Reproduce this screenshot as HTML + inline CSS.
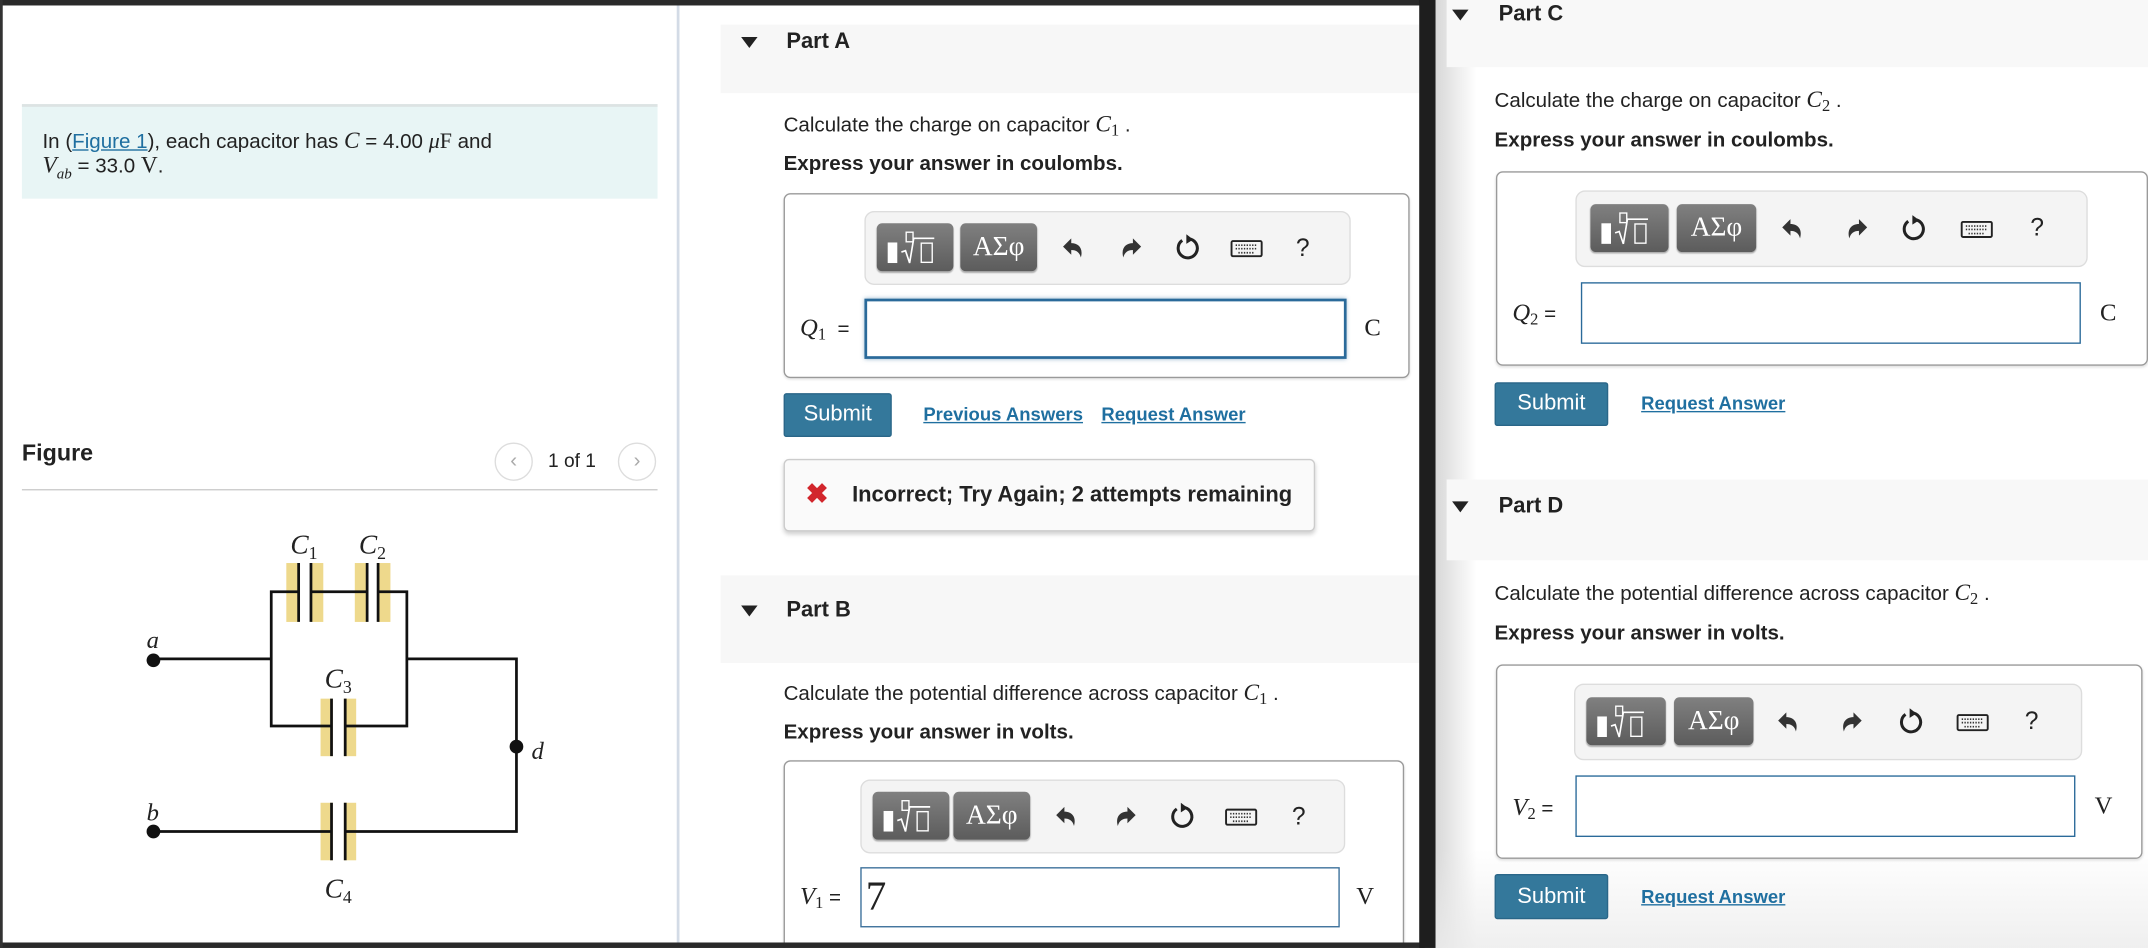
<!DOCTYPE html>
<html><head><meta charset="utf-8">
<style>
html,body{margin:0;padding:0;width:2148px;height:948px;overflow:hidden;background:#fff}
#s{position:absolute;left:0;top:0;width:1568px;height:692px;transform:scale(1.36990);transform-origin:0 0;font-family:"Liberation Sans",sans-serif;color:#222;overflow:hidden;background:#fff}
.a{position:absolute}
.t{position:absolute;white-space:nowrap;font-size:15px;line-height:1}
.b{font-weight:bold}
.m{font-family:"Liberation Serif",serif;font-style:italic}
.sb{font-family:"Liberation Serif",serif;font-size:12px;position:relative;top:3px}
.hdr{position:absolute;background:#f7f7f7}
.tri{position:absolute;width:0;height:0;border-left:6px solid transparent;border-right:6px solid transparent;border-top:8px solid #222}
.box{position:absolute;border:1px solid #9a9a9a;border-radius:5px;background:#fff;box-shadow:0 1px 2px rgba(0,0,0,.12)}
.tb{position:absolute;background:#f4f4f4;border:1px solid #ddd;border-radius:7px}
.btn{position:absolute;top:8px;width:56px;height:35px;border-radius:4px;background:linear-gradient(#808080,#5c5c5c);box-shadow:0 1px 1px rgba(0,0,0,.3)}
.btn2{color:#fff;font-family:"Liberation Serif",serif;font-size:20px;text-align:center;line-height:35px}
.ic{position:absolute}
.inp{position:absolute;border:2px solid #2a6a9a;background:#fff;box-shadow:0 0 3px rgba(42,106,154,.5)}
.sub{position:absolute;background:#34789b;border:1px solid #2a6688;border-radius:2px;color:#fff;font-size:16px;text-align:center}
.lnk{position:absolute;white-space:nowrap;color:#1f6fa0;font-weight:bold;font-size:13.5px;text-decoration:underline}
</style></head><body><div id="s">

<div class="a" style="left:494px;top:4px;width:2px;height:684px;background:#d3dbe6"></div>

<!-- left -->
<div class="a" style="left:16px;top:76px;width:464px;height:67px;background:#e8f5f5;border-top:2px solid #dde3e3"></div>
<div class="t" style="left:31px;top:94px">In (<span style="color:#1f6fa0;text-decoration:underline">Figure 1</span>), each capacitor has <span class="m" style="font-size:17px">C</span> = 4.00 <span class="m" style="font-size:16px">μ</span><span style="font-family:'Liberation Serif',serif;font-size:16px">F</span> and</div>
<div class="t" style="left:31px;top:112px"><span class="m" style="font-size:17px">V<sub style="font-size:11px">ab</sub></span> = 33.0 <span style="font-family:'Liberation Serif',serif;font-size:17px">V</span>.</div>

<div class="t b" style="left:16px;top:322px;font-size:17px">Figure</div>
<div class="a" style="left:361px;top:323px;width:26px;height:26px;border:1px solid #ddd;border-radius:50%;color:#aaa;font-size:15px;text-align:center;line-height:25px">&#x2039;</div>
<div class="t" style="left:400px;top:329px;font-size:14px">1 of 1</div>
<div class="a" style="left:451px;top:323px;width:26px;height:26px;border:1px solid #ddd;border-radius:50%;color:#aaa;font-size:15px;text-align:center;line-height:25px">&#x203A;</div>
<div class="a" style="left:16px;top:357px;width:464px;height:1px;background:#ccc"></div>

<svg class="a" style="left:0;top:360px" width="494" height="328" viewBox="0 360 494 328">
 <g fill="#eed98c">
  <rect x="209" y="411" width="9" height="43"/><rect x="227" y="411" width="9" height="43"/>
  <rect x="259" y="411" width="9" height="43"/><rect x="276" y="411" width="9" height="43"/>
  <rect x="234" y="510" width="9" height="42"/><rect x="251" y="510" width="9" height="42"/>
  <rect x="234" y="586" width="9" height="42"/><rect x="251" y="586" width="9" height="42"/>
 </g>
 <g stroke="#111" stroke-width="2" fill="none">
  <path d="M112 481 H198 V432 H218 M227 432 H268 M276 432 H297 V530 H252 M242 530 H198 V481"/>
  <path d="M297 481 H377 V607 H252 M242 607 H112"/>
  <path d="M218 411 V454 M227 411 V454 M268 411 V454 M276 411 V454 M242 510 V552 M252 510 V552 M242 586 V628 M252 586 V628"/>
 </g>
 <g fill="#111"><circle cx="112" cy="482" r="5"/><circle cx="112" cy="607" r="5"/><circle cx="377" cy="545" r="5"/></g>
 <g font-family="Liberation Serif,serif" font-style="italic" font-size="20" fill="#222">
  <text x="212" y="404">C<tspan font-size="13" font-style="normal" dy="4">1</tspan></text>
  <text x="262" y="404">C<tspan font-size="13" font-style="normal" dy="4">2</tspan></text>
  <text x="237" y="502">C<tspan font-size="13" font-style="normal" dy="4">3</tspan></text>
  <text x="237" y="655">C<tspan font-size="13" font-style="normal" dy="4">4</tspan></text>
  <text x="107" y="473" font-size="18">a</text>
  <text x="107" y="599" font-size="18">b</text>
  <text x="388" y="554" font-size="18">d</text>
 </g>
</svg>

<svg width="0" height="0" style="position:absolute">
 <defs>
  <g id="tpl"><rect x="8" y="14" width="7" height="15" fill="#fff"/><rect x="21.5" y="6.5" width="5" height="7" fill="none" stroke="#fff"/><path d="M18 21 L21 20 L24 29 L27 11 H42" fill="none" stroke="#fff" stroke-width="1.2"/><rect x="32.5" y="14.5" width="8" height="14" fill="none" stroke="#fff"/></g>
  <g id="und"><path d="M1 7 L7 1 V4.5 C12 4.5 16 8 14 15 C13 11 10.5 9.5 7 9.5 V13 Z" fill="#333"/></g>
  <g id="red"><path d="M15 7 L9 1 V4.5 C4 4.5 0 8 2 15 C3 11 5.5 9.5 9 9.5 V13 Z" fill="#333"/></g>
  <g id="rst"><path d="M11 3.5 A7 7 0 1 1 5 4.5" fill="none" stroke="#222" stroke-width="2.2"/><path d="M8 0 L13 3.8 L8 7 Z" fill="#222"/></g>
  <g id="kbd"><rect x="1" y="1" width="22" height="11" rx="1" fill="none" stroke="#222" stroke-width="1.4"/><path d="M4 4H20M4 6.5H20M6 9.5H18" stroke="#333" stroke-width="1.2" stroke-dasharray="1 1"/></g>
 </defs>
</svg>

<!-- Part A -->
<div class="hdr" style="left:526px;top:18px;width:510px;height:50px"></div>
<div class="tri" style="left:541px;top:27px"></div>
<div class="t b" style="left:574px;top:23px;font-size:16px">Part A</div>
<div class="t" style="left:572px;top:82px">Calculate the charge on capacitor <span class="m" style="font-size:17px">C</span><span class="sb">1</span> .</div>
<div class="t b" style="left:572px;top:112px">Express your answer in coulombs.</div>
<div class="box" style="left:572px;top:141px;width:455px;height:133px"></div>
<div class="tb" style="left:631px;top:154px;width:353px;height:52px">
 <div class="btn" style="left:8px"><svg width="56" height="35"><use href="#tpl"/></svg></div>
 <div class="btn btn2" style="left:69px">ΑΣφ</div>
 <svg class="ic" style="left:143px;top:18px" width="16" height="16"><use href="#und"/></svg>
 <svg class="ic" style="left:186px;top:18px" width="16" height="16"><use href="#red"/></svg>
 <svg class="ic" style="left:226px;top:16px" width="20" height="20"><use href="#rst"/></svg>
 <svg class="ic" style="left:266px;top:20px" width="24" height="14"><use href="#kbd"/></svg>
 <div class="t" style="left:314px;top:17px;font-size:18px">?</div>
</div>
<div class="t" style="left:584px;top:230px"><span class="m" style="font-size:18px">Q</span><span class="sb">1</span> &nbsp;=</div>
<div class="inp" style="left:631px;top:218px;width:348px;height:40px"></div>
<div class="t" style="left:996px;top:230px;font-family:'Liberation Serif',serif;font-size:18px">C</div>
<div class="sub" style="left:572px;top:287px;width:77px;height:30px;line-height:30px">Submit</div>
<div class="lnk" style="left:674px;top:295px">Previous Answers</div>
<div class="lnk" style="left:804px;top:295px">Request Answer</div>
<div class="a" style="left:572px;top:335px;width:386px;height:51px;background:#fafafa;border:1px solid #ccc;border-radius:4px;box-shadow:0 2px 3px rgba(0,0,0,.18)"></div>
<div class="t b" style="left:588px;top:351px;font-size:20px;color:#d2262c">✖</div>
<div class="t b" style="left:622px;top:354px;font-size:16px">Incorrect; Try Again; 2 attempts remaining</div>

<!-- Part B -->
<div class="hdr" style="left:526px;top:420px;width:510px;height:64px"></div>
<div class="tri" style="left:541px;top:442px"></div>
<div class="t b" style="left:574px;top:438px;font-size:16px">Part B</div>
<div class="t" style="left:572px;top:497px">Calculate the potential difference across capacitor <span class="m" style="font-size:17px">C</span><span class="sb">1</span> .</div>
<div class="t b" style="left:572px;top:527px">Express your answer in volts.</div>
<div class="box" style="left:572px;top:555px;width:451px;height:150px"></div>
<div class="tb" style="left:628px;top:569px;width:352px;height:52px">
 <div class="btn" style="left:8px"><svg width="56" height="35"><use href="#tpl"/></svg></div>
 <div class="btn btn2" style="left:67px">ΑΣφ</div>
 <svg class="ic" style="left:141px;top:18px" width="16" height="16"><use href="#und"/></svg>
 <svg class="ic" style="left:185px;top:18px" width="16" height="16"><use href="#red"/></svg>
 <svg class="ic" style="left:225px;top:16px" width="20" height="20"><use href="#rst"/></svg>
 <svg class="ic" style="left:265px;top:20px" width="24" height="14"><use href="#kbd"/></svg>
 <div class="t" style="left:314px;top:17px;font-size:18px">?</div>
</div>
<div class="t" style="left:584px;top:645px"><span class="m" style="font-size:18px">V</span><span class="sb">1</span> =</div>
<div class="a" style="left:628px;top:633px;width:348px;height:42px;border:1px solid #3a6f9a;background:#fff"></div>
<div class="t" style="left:632px;top:640px;font-family:'Liberation Serif',serif;font-size:30px">7</div>
<div class="t" style="left:990px;top:645px;font-family:'Liberation Serif',serif;font-size:18px">V</div>

<!-- frame (on top) -->
<div class="a" style="left:0;top:0;width:1040px;height:4px;background:#2a2a2a"></div>
<div class="a" style="left:0;top:688px;width:1040px;height:4px;background:#2a2a2a"></div>
<div class="a" style="left:0;top:0;width:2px;height:692px;background:#333"></div>

<!-- divider -->
<div class="a" style="left:1036px;top:0;width:12px;height:692px;background:#1e1e1e"></div>
<div class="a" style="left:1048px;top:0;width:30px;height:692px;background:linear-gradient(90deg,#d8d8d8,rgba(255,255,255,0))"></div>
<div class="a" style="left:1048px;top:620px;width:520px;height:72px;background:linear-gradient(rgba(255,255,255,0),rgba(235,235,235,.8))"></div>

<!-- Part C -->
<div class="hdr" style="left:1056px;top:0;width:512px;height:49px;background:#f8f8f8"></div>
<div class="tri" style="left:1060px;top:7px"></div>
<div class="t b" style="left:1094px;top:3px;font-size:16px">Part C</div>
<div class="t" style="left:1091px;top:64px">Calculate the charge on capacitor <span class="m" style="font-size:17px">C</span><span class="sb">2</span> .</div>
<div class="t b" style="left:1091px;top:95px">Express your answer in coulombs.</div>
<div class="box" style="left:1092px;top:125px;width:474px;height:140px"></div>
<div class="tb" style="left:1150px;top:139px;width:372px;height:54px">
 <div class="btn" style="left:10px;top:9px;width:57px">
 <svg width="57" height="35"><use href="#tpl"/></svg></div>
 <div class="btn btn2" style="left:73px;top:9px;width:58px">ΑΣφ</div>
 <svg class="ic" style="left:149px;top:19px" width="16" height="16"><use href="#und"/></svg>
 <svg class="ic" style="left:197px;top:19px" width="16" height="16"><use href="#red"/></svg>
 <svg class="ic" style="left:237px;top:17px" width="20" height="20"><use href="#rst"/></svg>
 <svg class="ic" style="left:280px;top:21px" width="24" height="14"><use href="#kbd"/></svg>
 <div class="t" style="left:331px;top:17px;font-size:18px">?</div>
</div>
<div class="t" style="left:1104px;top:219px"><span class="m" style="font-size:18px">Q</span><span class="sb">2</span> =</div>
<div class="a" style="left:1154px;top:206px;width:363px;height:43px;border:1px solid #2a6a9a;background:#fff"></div>
<div class="t" style="left:1533px;top:219px;font-family:'Liberation Serif',serif;font-size:18px">C</div>
<div class="sub" style="left:1091px;top:279px;width:81px;height:30px;line-height:30px">Submit</div>
<div class="lnk" style="left:1198px;top:287px">Request Answer</div>

<!-- Part D -->
<div class="hdr" style="left:1056px;top:350px;width:512px;height:59px;background:#f8f8f8"></div>
<div class="tri" style="left:1060px;top:366px"></div>
<div class="t b" style="left:1094px;top:362px;font-size:16px">Part D</div>
<div class="t" style="left:1091px;top:424px">Calculate the potential difference across capacitor <span class="m" style="font-size:17px">C</span><span class="sb">2</span> .</div>
<div class="t b" style="left:1091px;top:455px">Express your answer in volts.</div>
<div class="box" style="left:1092px;top:485px;width:470px;height:140px"></div>
<div class="tb" style="left:1149px;top:499px;width:369px;height:54px">
 <div class="btn" style="left:8px;top:9px;width:58px"><svg width="58" height="35"><use href="#tpl"/></svg></div>
 <div class="btn btn2" style="left:72px;top:9px;width:58px">ΑΣφ</div>
 <svg class="ic" style="left:147px;top:19px" width="16" height="16"><use href="#und"/></svg>
 <svg class="ic" style="left:194px;top:19px" width="16" height="16"><use href="#red"/></svg>
 <svg class="ic" style="left:236px;top:17px" width="20" height="20"><use href="#rst"/></svg>
 <svg class="ic" style="left:278px;top:21px" width="24" height="14"><use href="#kbd"/></svg>
 <div class="t" style="left:328px;top:17px;font-size:18px">?</div>
</div>
<div class="t" style="left:1104px;top:580px"><span class="m" style="font-size:18px">V</span><span class="sb">2</span> =</div>
<div class="a" style="left:1150px;top:566px;width:363px;height:43px;border:1px solid #2a6a9a;background:#fff"></div>
<div class="t" style="left:1529px;top:579px;font-family:'Liberation Serif',serif;font-size:18px">V</div>
<div class="sub" style="left:1091px;top:638px;width:81px;height:31px;line-height:31px">Submit</div>
<div class="lnk" style="left:1198px;top:647px">Request Answer</div>

</div></body></html>
